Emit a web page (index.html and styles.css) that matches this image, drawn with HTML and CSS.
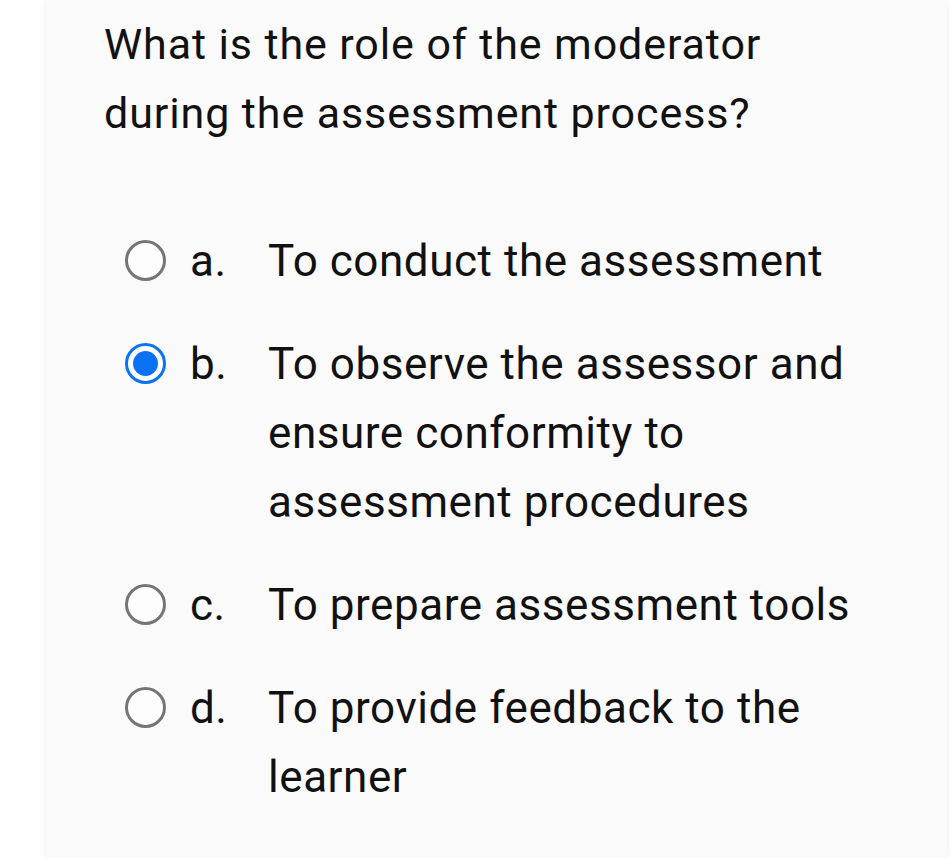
FILE: index.html
```html
<!DOCTYPE html>
<html>
<head>
<meta charset="utf-8">
<link rel="stylesheet" href="styles.css">
</head>
<body>
<div class="card">
  <div class="question">What is the role of the moderator during the assessment process?</div>
  <div class="options">
    <div class="option">
      <span class="radio"></span>
      <span class="letter">a.</span>
      <span class="text">To conduct the assessment</span>
    </div>
    <div class="option">
      <span class="radio checked"></span>
      <span class="letter">b.</span>
      <span class="text">To observe the assessor and ensure conformity to assessment procedures</span>
    </div>
    <div class="option">
      <span class="radio"></span>
      <span class="letter">c.</span>
      <span class="text">To prepare assessment tools</span>
    </div>
    <div class="option">
      <span class="radio"></span>
      <span class="letter">d.</span>
      <span class="text">To provide feedback to the learner</span>
    </div>
  </div>
</div>
</body>
</html>
```
FILE: styles.css
```css
html, body {
  margin: 0;
  padding: 0;
  background: #ffffff;
  height: 100%;
  overflow: hidden;
}
body {
  font-family: Roboto, "Noto Sans", sans-serif;
  color: #111111;
  padding: 0 4px 0 46px;
  box-sizing: border-box;
}
.card {
  background: #fafafa;
  height: 100%;
  box-shadow: 0 0 6px rgba(0, 0, 0, 0.08);
  padding: 10px 40px 0 58px;
  box-sizing: border-box;
}
.question {
  font-size: 43px;
  letter-spacing: 0.9px;
  line-height: 69px;
  width: 700px;
}
.options {
  margin-top: 79px;
  display: flex;
  flex-direction: column;
  gap: 34px;
  padding-left: 21px;
}
.option {
  display: flex;
  align-items: flex-start;
  font-size: 44px;
  letter-spacing: 0.55px;
  line-height: 69px;
}
.radio {
  flex: none;
  width: 41px;
  height: 41px;
  box-sizing: border-box;
  border: 3px solid #757575;
  border-radius: 50%;
  margin-top: 13px;
  background: #fdfdfd;
  position: relative;
}
.radio.checked {
  border-color: #0b72f5;
  background: #ffffff;
}
.radio.checked::after {
  content: "";
  position: absolute;
  left: 5px;
  top: 5px;
  width: 25px;
  height: 25px;
  border-radius: 50%;
  background: #0b72f5;
}
.letter {
  flex: none;
  width: 78px;
  margin-left: 24px;
}
.text {
  flex: 1;
  max-width: 600px;
}
```
